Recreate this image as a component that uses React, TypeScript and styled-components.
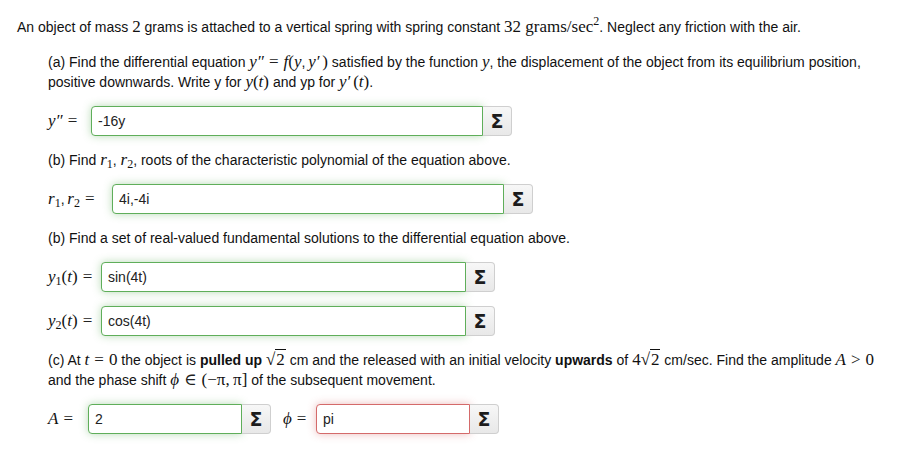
import styled, { createGlobalStyle } from 'styled-components'

const Global = createGlobalStyle`
  body {
    margin: 0;
    background: #fff;
  }
`

function App() {
  const solutions = [
    { idx: '1', value: 'sin(4t)' },
    { idx: '2', value: 'cos(4t)' }
  ]
  return (
    <Page>
      <Global />
      <Intro>
        An object of mass <Up>2</Up> grams is attached to a vertical spring with spring constant{' '}
        <Up>32 grams/sec<sup>2</sup></Up>. Neglect any friction with the air.
      </Intro>
      <Parts>
        <Text>
          (a) Find the differential equation <M>y″</M><Rel>=</Rel><M>f</M><Up>(</Up><M>y</M>,&thinsp;<M>y′</M>&thinsp;<Up>)</Up> satisfied by the function <M>y</M>, the displacement of the object from its equilibrium position,
          <br />
          positive downwards. Write y for <M>y</M><Up>(</Up><M>t</M><Up>)</Up> and yp for <M>y′</M>&thinsp;<Up>(</Up><M>t</M><Up>)</Up>.
        </Text>
        <Row>
          <Label $w={43}><M>y″</M><Rel>=</Rel></Label>
          <AnswerGroup $w={421}>
            <Input $state="ok" defaultValue="-16y" />
            <Sigma>Σ</Sigma>
          </AnswerGroup>
        </Row>
        <Text>
          (b) Find <M>r</M><Sub>1</Sub>, <M>r</M><Sub>2</Sub>, roots of the characteristic polynomial of the equation above.
        </Text>
        <Row>
          <Label $w={64}><M>r</M><Sub>1</Sub>,&thinsp;<M>r</M><Sub>2</Sub><Rel>=</Rel></Label>
          <AnswerGroup $w={421}>
            <Input $state="ok" defaultValue="4i,-4i" />
            <Sigma>Σ</Sigma>
          </AnswerGroup>
        </Row>
        <Text>(b) Find a set of real-valued fundamental solutions to the differential equation above.</Text>
        <Pair>
          {solutions.map(({ idx, value }) => (
            <Row key={idx}>
              <Label $w={53}>
                <M>y</M><Sub>{idx}</Sub><Up>(</Up><M>t</M><Up>)</Up><Rel>=</Rel>
              </Label>
              <AnswerGroup $w={394}>
                <Input $state="ok" defaultValue={value} />
                <Sigma>Σ</Sigma>
              </AnswerGroup>
            </Row>
          ))}
        </Pair>
        <Text>
          (c) At <M>t</M><Rel>=</Rel><Up>0</Up> the object is <b>pulled up</b> <Up>√<Over>2</Over></Up> cm and the released with an initial velocity <b>upwards</b> of <Up>4√<Over>2</Over></Up> cm/sec. Find the amplitude <M>A</M><Rel>&gt;</Rel><Up>0</Up>
          <br />
          and the phase shift <M>ϕ</M><Rel>∈</Rel><Up>(−π,&thinsp;π]</Up> of the subsequent movement.
        </Text>
        <Row>
          <Label $w={40}><M>A</M><Rel>=</Rel></Label>
          <AnswerGroup $w={183}>
            <Input $state="ok" defaultValue="2" />
            <Sigma>Σ</Sigma>
          </AnswerGroup>
          <Label $w={45} $pad={12}><M>ϕ</M><Rel>=</Rel></Label>
          <AnswerGroup $w={183}>
            <Input $state="bad" defaultValue="pi" />
            <Sigma>Σ</Sigma>
          </AnswerGroup>
        </Row>
      </Parts>
    </Page>
  )
}

const Page = styled.div`
  padding: 17px 10px 20px 17px;
  font-family: "Liberation Sans", Arial, sans-serif;
  font-size: 14px;
  line-height: 20px;
  color: #111;
  sup {
    font-family: "Liberation Serif", "DejaVu Serif", serif;
    font-size: 12px;
    line-height: 0;
    vertical-align: 7px;
  }
`

const Intro = styled.div`
  height: 20px;
  white-space: nowrap;
`

const Parts = styled.div`
  margin: 15px 0 0 31px;
  display: flex;
  flex-direction: column;
  gap: 14px;
`

const Text = styled.div`
  white-space: nowrap;
  b {
    font-weight: bold;
  }
`

const M = styled.span`
  font-family: "Liberation Serif", "DejaVu Serif", serif;
  font-style: italic;
  font-size: 17px;
`

const Up = styled.span`
  font-family: "Liberation Serif", "DejaVu Serif", serif;
  font-size: 17px;
`

const Rel = styled.span`
  font-family: "Liberation Serif", "DejaVu Serif", serif;
  font-size: 17px;
  margin: 0 5px;
  color: #222;
`

const Over = styled.span`
  border-top: 1px solid #111;
  padding: 0 1px;
`

const Sub = styled.sub`
  font-family: "Liberation Serif", "DejaVu Serif", serif;
  font-size: 12px;
  line-height: 0;
  vertical-align: -3px;
`

const Pair = styled.div`
  display: flex;
  flex-direction: column;
  gap: 14px;
`

const Row = styled.div`
  display: flex;
  align-items: center;
  height: 30px;
`

const Label = styled.div<{ $w: number; $pad?: number }>`
  width: ${(p) => p.$w}px;
  padding-left: ${(p) => p.$pad || 0}px;
  box-sizing: border-box;
  white-space: nowrap;
`

const AnswerGroup = styled.div<{ $w: number }>`
  display: flex;
  width: ${(p) => p.$w}px;
  height: 30px;
`

const Input = styled.input<{ $state: 'ok' | 'bad' }>`
  flex: 1;
  min-width: 0;
  box-sizing: border-box;
  height: 30px;
  padding: 0 6px;
  font-family: "Liberation Sans", Arial, sans-serif;
  font-size: 14px;
  color: #222;
  background: #fff;
  border: 1px solid ${(p) => (p.$state === 'ok' ? '#5fae5a' : '#d46a6a')};
  border-radius: 4px 0 0 4px;
  box-shadow: 0 0 8px ${(p) => (p.$state === 'ok' ? 'rgba(95,174,90,0.45)' : 'rgba(212,106,106,0.45)')};
  outline: none;
`

const Sigma = styled.div`
  width: 29px;
  box-sizing: border-box;
  display: flex;
  align-items: center;
  justify-content: center;
  font-family: "DejaVu Sans", "Liberation Sans", sans-serif;
  font-weight: bold;
  font-size: 19px;
  line-height: 1;
  color: #1c1c1c;
  background: linear-gradient(#f7f7f7, #e8e8e8);
  border: 1px solid #cfcfcf;
  border-left: none;
  border-radius: 0 4px 4px 0;
`

export default App
